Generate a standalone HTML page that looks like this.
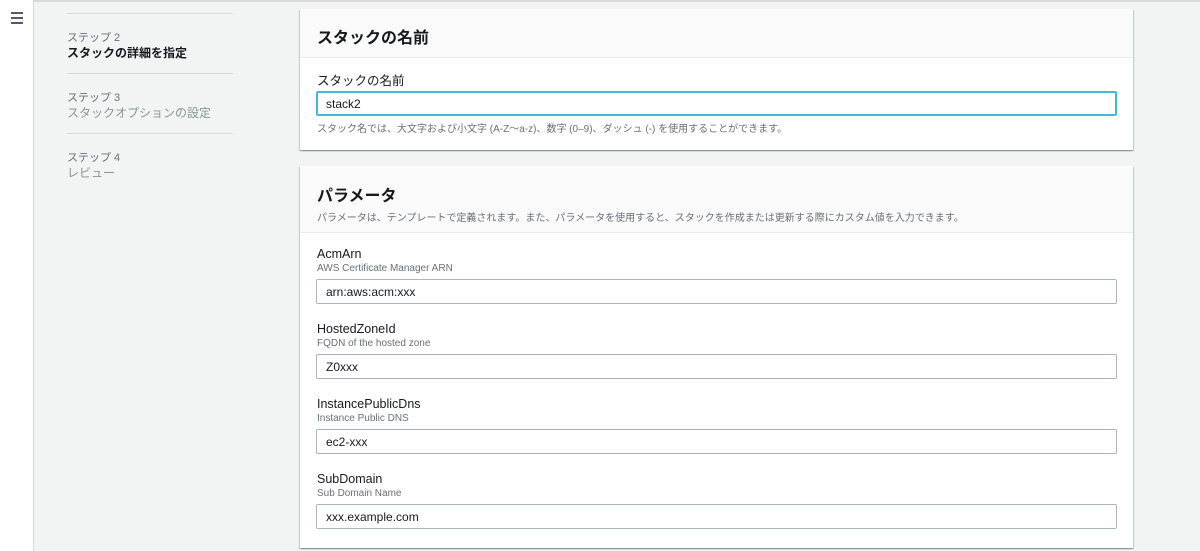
<!DOCTYPE html>
<html><head><meta charset="utf-8"><style>
*{box-sizing:border-box;margin:0;padding:0}
body{width:1200px;height:551px;overflow:hidden;background:#f2f3f3;font-family:"Liberation Sans","Noto Sans CJK JP",sans-serif;color:#16191f;position:relative}
.top{position:absolute;left:0;top:0;width:1200px;height:2px;background:#d5dbdb}
.side{position:absolute;left:0;top:0;width:34px;height:551px;background:#fff;border-right:1px solid #d5dbdb}
.ham{position:absolute;left:11px;top:12px;width:12px}
.ham i{display:block;height:2px;background:#545b64;margin-bottom:3px}
.hr{position:absolute;left:67px;width:166px;height:1px;background:#d5dbdb}
.st{position:absolute;left:67px;font-size:11px;color:#687078}
.sn{position:absolute;left:67px;font-size:12px;color:#879596}
.card{position:absolute;left:300px;width:833px;background:#fff;box-shadow:0 1px 1px rgba(0,28,36,.3),1px 1px 1px rgba(0,28,36,.15),-1px 1px 1px rgba(0,28,36,.15)}
.hd{background:#fafafa;border-bottom:1px solid #eaeded;padding:0 17px}
.hd h2{font-size:16px;font-weight:bold}
.abs{position:absolute}
.lab{font-size:12.5px;color:#16191f}
.desc{font-size:10px;color:#687078}
.inp{position:absolute;left:16px;width:801px;height:25px;border:1px solid #aab7b8;border-radius:2px;font-size:12px;padding:5px 9px;color:#16191f}
</style></head><body>
<div class="top"></div>
<div class="side"><div class="ham"><i></i><i></i><i></i></div></div>
<div class="hr" style="top:13px"></div>
<div class="st" style="top:29px">ステップ 2</div>
<div class="sn" style="top:44px;color:#16191f;font-weight:bold">スタックの詳細を指定</div>
<div class="hr" style="top:73px"></div>
<div class="st" style="top:89px">ステップ 3</div>
<div class="sn" style="top:104px">スタックオプションの設定</div>
<div class="hr" style="top:133px"></div>
<div class="st" style="top:149px">ステップ 4</div>
<div class="sn" style="top:164px">レビュー</div>

<div class="card" style="top:9px;height:141px">
 <div class="hd" style="height:49px;padding-top:15px"><h2>スタックの名前</h2></div>
 <div class="abs lab" style="left:17px;top:61px">スタックの名前</div>
 <div class="inp" style="top:82px;border:1px solid #44b9d6;box-shadow:0 0 0 1px #44b9d6 inset;">stack2</div>
 <div class="abs desc" style="left:17px;top:111px">スタック名では、大文字および小文字 (A-Z〜a-z)、数字 (0–9)、ダッシュ (-) を使用することができます。</div>
</div>

<div class="card" style="top:166px;height:382px">
 <div class="hd" style="height:67px;padding-top:16px"><h2>パラメータ</h2>
  <div class="desc" style="margin-top:3px">パラメータは、テンプレートで定義されます。また、パラメータを使用すると、スタックを作成または更新する際にカスタム値を入力できます。</div></div>
 <div class="abs lab" style="left:17px;top:81px">AcmArn</div>
 <div class="abs desc" style="left:17px;top:97px">AWS Certificate Manager ARN</div>
 <div class="inp" style="top:113px">arn:aws:acm:xxx</div>
 <div class="abs lab" style="left:17px;top:156px">HostedZoneId</div>
 <div class="abs desc" style="left:17px;top:172px">FQDN of the hosted zone</div>
 <div class="inp" style="top:188px">Z0xxx</div>
 <div class="abs lab" style="left:17px;top:231px">InstancePublicDns</div>
 <div class="abs desc" style="left:17px;top:247px">Instance Public DNS</div>
 <div class="inp" style="top:263px">ec2-xxx</div>
 <div class="abs lab" style="left:17px;top:306px">SubDomain</div>
 <div class="abs desc" style="left:17px;top:322px">Sub Domain Name</div>
 <div class="inp" style="top:338px">xxx.example.com</div>
</div>
</body></html>
